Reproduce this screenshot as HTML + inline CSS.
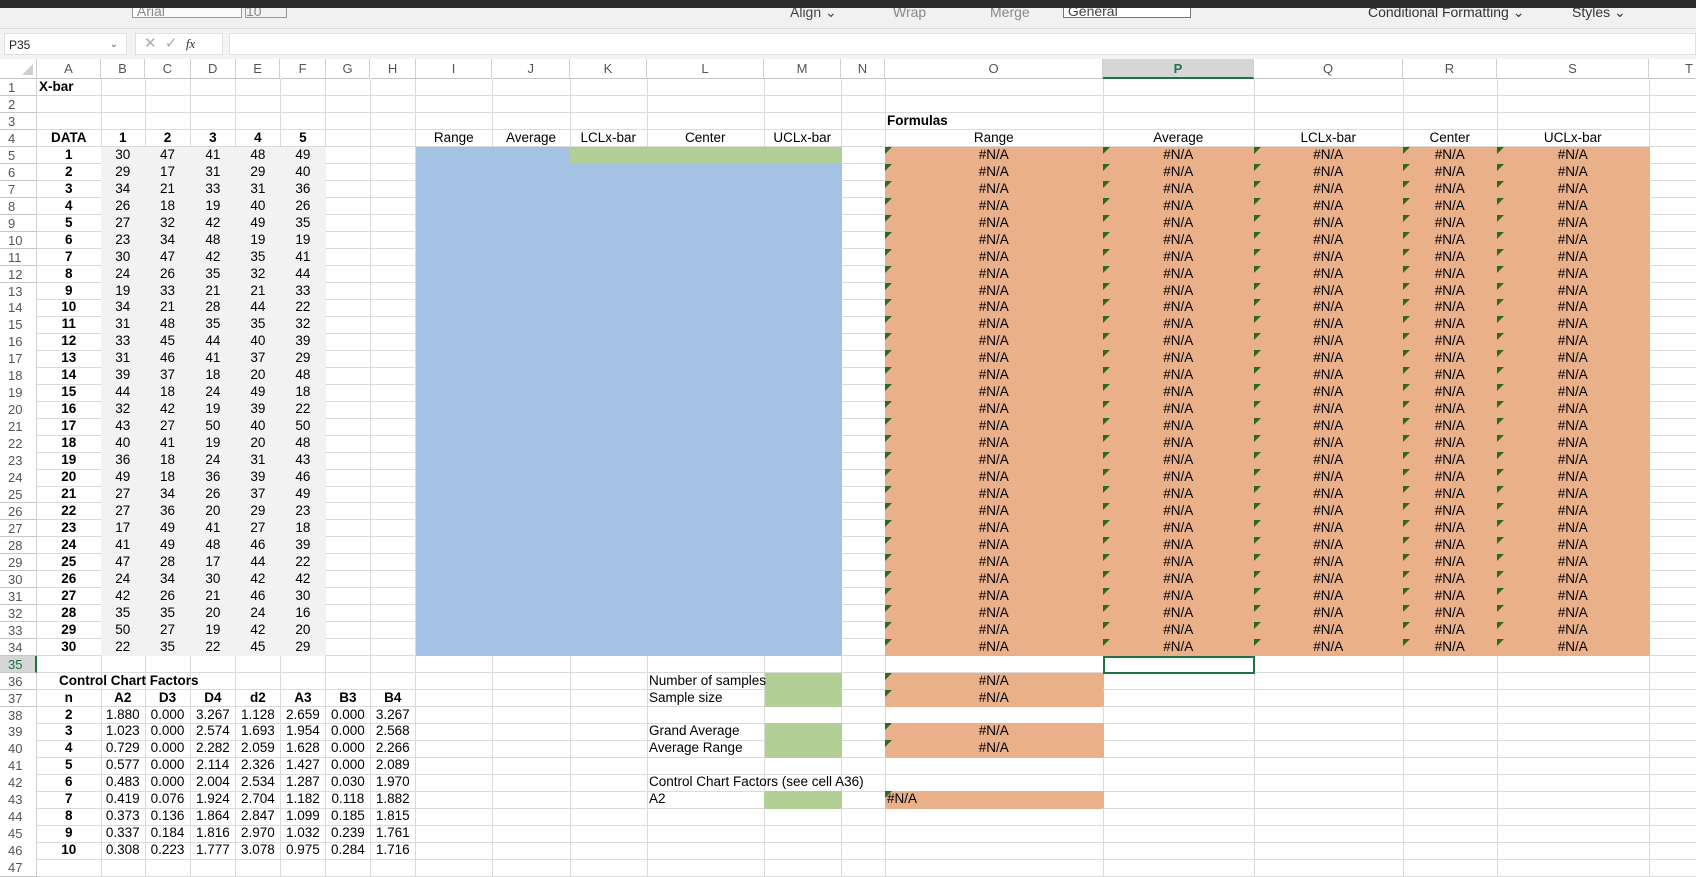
<!DOCTYPE html>
<html><head><meta charset="utf-8">
<style>
body{margin:0;width:1696px;height:865px;overflow:hidden;background:#fff;font-family:"Liberation Sans",Arial,sans-serif;position:relative}
.c{position:absolute;box-sizing:border-box;border-right:1px solid #dadada;border-bottom:1px solid #dadada;font-size:13.5px;line-height:16px;white-space:nowrap;color:#000;padding:0 2px}
.h{position:absolute;box-sizing:border-box;background:#fff;color:#555;font-size:13px;text-align:center;border-right:1px solid #d0d0d0;border-bottom:1px solid #c6c6c6}
.tri{position:absolute;left:0;top:0;width:0;height:0;border-top:7px solid #2d6a1f;border-right:7px solid transparent}
</style></head><body>
<div style="position:absolute;left:0;top:0;width:1696px;height:8px;background:#2b2b2b"></div>
<div style="position:absolute;left:0;top:8px;width:1696px;height:20px;background:#f1f1f1;border-bottom:1px solid #ddd;font-size:14px;color:#888;overflow:hidden">
<div style="position:absolute;left:132px;top:-6px;width:108px;height:14px;border:1px solid #999;background:#fafafa">&nbsp;Arial</div>
<div style="position:absolute;left:245px;top:-6px;width:40px;height:14px;border:1px solid #999">10</div>
<span style="position:absolute;left:790px;top:-4px;color:#444">Align ⌄</span>
<span style="position:absolute;left:893px;top:-4px">Wrap</span>
<span style="position:absolute;left:990px;top:-4px">Merge</span>
<div style="position:absolute;left:1063px;top:-6px;width:126px;height:14px;border:1px solid #777;background:#fff;color:#444">&nbsp;General</div>
<span style="position:absolute;left:1368px;top:-4px;color:#333">Conditional Formatting ⌄</span>
<span style="position:absolute;left:1572px;top:-4px;color:#333">Styles ⌄</span>
</div>
<div style="position:absolute;left:0;top:29px;width:1696px;height:30px;background:#f3f3f3"></div>
<div style="position:absolute;left:4px;top:33px;width:123px;height:22px;background:#fff;border:1px solid #e0e0e0;font-size:12px;line-height:22px;color:#222;box-sizing:border-box;padding-left:4px">P35<span style="position:absolute;right:8px;color:#666;font-size:10px">⌄</span></div>
<div style="position:absolute;left:135px;top:33px;width:88px;height:22px;background:#fff;border:1px solid #e0e0e0;box-sizing:border-box;color:#aaa;font-size:15px;line-height:20px;padding-left:8px">✕ &nbsp;✓ &nbsp;<i style="color:#333;font-family:'Liberation Serif';font-size:13px">fx</i></div>
<div style="position:absolute;left:229px;top:33px;width:1467px;height:22px;background:#fff;border:1px solid #e0e0e0;box-sizing:border-box"></div>
<div id="g"></div>
<script>
var X=[0,37,101,145,190.6,235.7,280.5,325.7,370.5,415.6,492.5,570,647,764,841,885,1103,1254,1403,1497,1649,1730];
var cols="ABCDEFGHIJKLMNOPQRST".split("");
var T=79,RH=16.96;
function ry(r){return T+(r-1)*RH}
var g=document.getElementById('g'),h='';
h+='<div class="h" style="left:0;top:59px;width:37px;height:20px;background:#fff"><div style="position:absolute;right:3px;bottom:3px;border-left:11px solid transparent;border-bottom:11px solid #cfcfcf"></div></div>';
for(var i=0;i<20;i++){var sel=cols[i]=='P';h+='<div class="h" style="left:'+X[i+1]+'px;top:59px;width:'+(X[i+2]-X[i+1])+'px;height:20px;line-height:19px;'+(sel?'background:#d6d6d6;color:#217346;font-weight:bold;border-bottom:2px solid #217346':'')+'">'+cols[i]+'</div>'}
for(var r=1;r<=47;r++){var y=ry(r);var s=r==35;h+='<div class="h" style="left:0;top:'+y+'px;width:37px;height:'+(RH+0.5)+'px;line-height:17px;text-align:left;padding-left:8px;'+(s?'background:#d6d6d6;color:#217346;border-right:2px solid #217346':'')+'">'+r+'</div>'}
var D={};function set(c,r,t,st){D[c+r]={t:t,s:st||''}}
var data=[[30,47,41,48,49],[29,17,31,29,40],[34,21,33,31,36],[26,18,19,40,26],[27,32,42,49,35],[23,34,48,19,19],[30,47,42,35,41],[24,26,35,32,44],[19,33,21,21,33],[34,21,28,44,22],[31,48,35,35,32],[33,45,44,40,39],[31,46,41,37,29],[39,37,18,20,48],[44,18,24,49,18],[32,42,19,39,22],[43,27,50,40,50],[40,41,19,20,48],[36,18,24,31,43],[49,18,36,39,46],[27,34,26,37,49],[27,36,20,29,23],[17,49,41,27,18],[41,49,48,46,39],[47,28,17,44,22],[24,34,30,42,42],[42,26,21,46,30],[35,35,20,24,16],[50,27,19,42,20],[22,35,22,45,29]];
set('A',1,'X-bar','font-weight:bold');
set('A',4,'DATA','font-weight:bold;text-align:center');
for(var k=1;k<=5;k++)set(cols[k],4,k,'font-weight:bold;text-align:center');
['Range','Average','LCLx-bar','Center','UCLx-bar'].forEach(function(t,j){set(cols[8+j],4,t,'text-align:center');set(['O','P','Q','R','S'][j],4,t,'text-align:center')});
set('O',3,'Formulas','font-weight:bold');
var BG={};
for(var r=5;r<=34;r++){set('A',r,r-4,'font-weight:bold;text-align:center');for(var k=0;k<5;k++){set(cols[k+1],r,data[r-5][k],'text-align:center');BG[cols[k+1]+r]='#f2f2f2'}
 ['I','J','K','L','M'].forEach(function(c){BG[c+r]='#a4c2e4'});
 ['O','P','Q','R','S'].forEach(function(c){BG[c+r]='#eab08a';set(c,r,'#N/A','text-align:center;tri')});}
['K','L','M'].forEach(function(c){BG[c+5]='#b2d096'});
set('A',36,'Control Chart Factors','font-weight:bold;padding-left:22px');
var fh=['n','A2','D3','D4','d2','A3','B3','B4'];fh.forEach(function(t,j){set(cols[j],37,t,'font-weight:bold;text-align:center')});
var F=[[2,'1.880','0.000','3.267','1.128','2.659','0.000','3.267'],[3,'1.023','0.000','2.574','1.693','1.954','0.000','2.568'],[4,'0.729','0.000','2.282','2.059','1.628','0.000','2.266'],[5,'0.577','0.000','2.114','2.326','1.427','0.000','2.089'],[6,'0.483','0.000','2.004','2.534','1.287','0.030','1.970'],[7,'0.419','0.076','1.924','2.704','1.182','0.118','1.882'],[8,'0.373','0.136','1.864','2.847','1.099','0.185','1.815'],[9,'0.337','0.184','1.816','2.970','1.032','0.239','1.761'],[10,'0.308','0.223','1.777','3.078','0.975','0.284','1.716']];
F.forEach(function(row,i){row.forEach(function(v,j){set(cols[j],38+i,v,(j==0?'font-weight:bold;':'')+'text-align:center')})});
set('L',36,'Number of samples');set('L',37,'Sample size');set('L',39,'Grand Average');set('L',40,'Average Range');set('L',42,'Control Chart Factors (see cell A36)');set('L',43,'A2');
[36,37,39,40,43].forEach(function(r){BG['M'+r]='#b2d096';BG['O'+r]='#eab08a';if(r!=43)set('O',r,'#N/A','text-align:center;tri');else set('O',r,'#N/A','tri')});
for(var r=1;r<=47;r++){for(var i=0;i<20;i++){var c=cols[i],key=c+r,x=X[i+1],w=X[i+2]-X[i+1],y=ry(r);var bg=BG[key];var d=D[key];var st=d?d.s:'';var tri=st.indexOf('tri')>=0;st=st.replace(';tri','').replace('tri','');
var over=d&&!/center/.test(st)&&(''+d.t).length>6;
h+='<div class="c" style="left:'+x+'px;top:'+y+'px;width:'+(w+0.5)+'px;height:'+(RH+0.5)+'px;'+(bg?'background:'+bg+';border-color:'+bg+';':'')+(over?'overflow:visible;z-index:3;background:transparent':'z-index:1')+';'+st+'">'+(tri?'<div class="tri"></div>':'')+(d?d.t:'')+'</div>'}}
h+='<div style="position:absolute;left:'+X[16]+'px;top:'+ry(35)+'px;width:'+(X[17]-X[16]+1)+'px;height:18px;box-sizing:border-box;border:2px solid #217346;z-index:5"></div>';
g.innerHTML=h;
</script>
</body></html>
